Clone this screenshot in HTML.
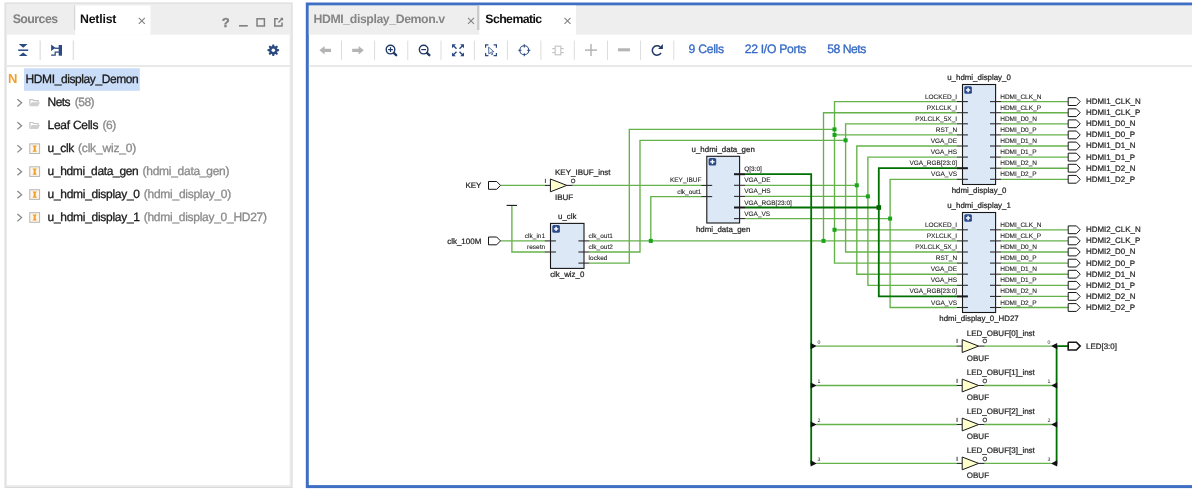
<!DOCTYPE html>
<html><head><meta charset="utf-8"><title>Schematic</title>
<style>
html,body{margin:0;padding:0;background:#fff;}
body{width:1192px;height:490px;overflow:hidden;font-family:'Liberation Sans', sans-serif;}
svg{display:block;position:absolute;left:0;top:0;font-family:'Liberation Sans', sans-serif;}
text{font-family:'Liberation Sans', sans-serif;text-rendering:geometricPrecision;}
.s text{stroke:#242424;stroke-width:0.22px;}
</style></head><body>
<svg width="1192" height="490" viewBox="0 0 1192 490">
<rect x="0.00" y="0.00" width="1192.00" height="490.00" fill="#ffffff" stroke="none" stroke-width="1.0"/>
<rect x="4.50" y="2.50" width="288.10" height="485.50" fill="#d9d9d9" stroke="none" stroke-width="1.0"/>
<rect x="5.50" y="3.50" width="286.10" height="483.50" fill="#ebebeb" stroke="none" stroke-width="1.0"/>
<rect x="7.00" y="4.00" width="282.60" height="481.00" fill="#ffffff" stroke="none" stroke-width="1.0"/>
<rect x="7.00" y="4.00" width="283.50" height="30.70" fill="#eeeeee" stroke="none" stroke-width="1.0"/>
<rect x="75.00" y="5.50" width="75.50" height="29.30" fill="#ffffff" stroke="none" stroke-width="1.0"/>
<line x1="74.70" y1="5.50" x2="74.70" y2="30.00" stroke="#d0d0d0" stroke-width="1"/>
<line x1="138.80" y1="17.80" x2="144.80" y2="23.80" stroke="#808080" stroke-width="1.1"/>
<line x1="138.80" y1="23.80" x2="144.80" y2="17.80" stroke="#808080" stroke-width="1.1"/>
<rect x="239.00" y="25.00" width="8.80" height="1.60" fill="#808080" stroke="none" stroke-width="1.0"/>
<rect x="257.00" y="18.80" width="7.40" height="7.20" fill="none" stroke="#808080" stroke-width="1.5"/>
<path d="M278.2 18.8 H274.8 V26 H282 V22.6" fill="none" stroke="#808080" stroke-width="1.5"/>
<path d="M278.4 22.4 L282.5 18.3 M280.6 18.4 H282.4 V20.2" fill="none" stroke="#808080" stroke-width="1.4"/>
<rect x="7.00" y="65.20" width="283.50" height="1.60" fill="#e4e4e4" stroke="none" stroke-width="1.0"/>
<path d="M18.8 43.9 H27.6 L23.2 47.8 Z M18.8 56.0 H27.6 L23.2 52.6 Z" fill="#2b4a82"/>
<rect x="18.20" y="49.45" width="10.00" height="1.50" fill="#2b4a82" stroke="none" stroke-width="1.0"/>
<line x1="40.20" y1="40.40" x2="40.20" y2="60.00" stroke="#e2e2e2" stroke-width="1.4"/>
<path d="M51.1 44.4 L55.4 47.8 L55.4 48.0 L51.1 51.0 Z" fill="#2b4a82"/>
<rect x="54.80" y="47.60" width="4.20" height="1.30" fill="#2b4a82" stroke="none" stroke-width="1.0"/>
<rect x="58.70" y="45.00" width="3.30" height="10.70" fill="#2b4a82" stroke="none" stroke-width="1.0"/>
<path d="M51.1 55.2 H55.2 V52.2 H58.9" fill="none" stroke="#2b4a82" stroke-width="1.2"/>
<line x1="73.40" y1="40.40" x2="73.40" y2="60.00" stroke="#e2e2e2" stroke-width="1.4"/>
<g transform="translate(273.3,50.2)">
<path d="M-1.45 -3.2 L-0.85 -5.8 H0.85 L1.45 -3.2 Z" fill="#2b4a82" transform="rotate(0)"/>
<path d="M-1.45 -3.2 L-0.85 -5.8 H0.85 L1.45 -3.2 Z" fill="#2b4a82" transform="rotate(45)"/>
<path d="M-1.45 -3.2 L-0.85 -5.8 H0.85 L1.45 -3.2 Z" fill="#2b4a82" transform="rotate(90)"/>
<path d="M-1.45 -3.2 L-0.85 -5.8 H0.85 L1.45 -3.2 Z" fill="#2b4a82" transform="rotate(135)"/>
<path d="M-1.45 -3.2 L-0.85 -5.8 H0.85 L1.45 -3.2 Z" fill="#2b4a82" transform="rotate(180)"/>
<path d="M-1.45 -3.2 L-0.85 -5.8 H0.85 L1.45 -3.2 Z" fill="#2b4a82" transform="rotate(225)"/>
<path d="M-1.45 -3.2 L-0.85 -5.8 H0.85 L1.45 -3.2 Z" fill="#2b4a82" transform="rotate(270)"/>
<path d="M-1.45 -3.2 L-0.85 -5.8 H0.85 L1.45 -3.2 Z" fill="#2b4a82" transform="rotate(315)"/>
<circle r="3.9" fill="#2b4a82"/><circle r="1.75" fill="#ffffff"/></g>
<rect x="24.00" y="68.30" width="115.80" height="22.50" fill="#c9dcf8" stroke="none" stroke-width="1.0"/>
<path d="M17.40 99.25 L21.60 102.85 L17.40 106.45" fill="none" stroke="#868686" stroke-width="1.25"/>
<path d="M29.90 105.55 V99.55 H32.90 L33.90 100.55 H38.10 V101.95" fill="none" stroke="#c4c4c4" stroke-width="1.2"/>
<path d="M29.70 106.15 L31.70 102.15 H39.90 L38.10 106.15 Z" fill="#cfcfcf"/>
<path d="M17.40 122.20 L21.60 125.80 L17.40 129.40" fill="none" stroke="#868686" stroke-width="1.25"/>
<path d="M29.90 128.50 V122.50 H32.90 L33.90 123.50 H38.10 V124.90" fill="none" stroke="#c4c4c4" stroke-width="1.2"/>
<path d="M29.70 129.10 L31.70 125.10 H39.90 L38.10 129.10 Z" fill="#cfcfcf"/>
<path d="M17.40 145.15 L21.60 148.75 L17.40 152.35" fill="none" stroke="#868686" stroke-width="1.25"/>
<rect x="29.80" y="143.85" width="9.80" height="9.60" fill="#fdf6ea" stroke="#b4b4b4" stroke-width="1"/>
<path d="M32.50 145.55 H36.90 L35.70 147.35 V149.95 L36.90 151.75 H32.50 L33.70 149.95 V147.35 Z" fill="#f0a030"/>
<path d="M17.40 168.10 L21.60 171.70 L17.40 175.30" fill="none" stroke="#868686" stroke-width="1.25"/>
<rect x="29.80" y="166.80" width="9.80" height="9.60" fill="#fdf6ea" stroke="#b4b4b4" stroke-width="1"/>
<path d="M32.50 168.50 H36.90 L35.70 170.30 V172.90 L36.90 174.70 H32.50 L33.70 172.90 V170.30 Z" fill="#f0a030"/>
<path d="M17.40 191.05 L21.60 194.65 L17.40 198.25" fill="none" stroke="#868686" stroke-width="1.25"/>
<rect x="29.80" y="189.75" width="9.80" height="9.60" fill="#fdf6ea" stroke="#b4b4b4" stroke-width="1"/>
<path d="M32.50 191.45 H36.90 L35.70 193.25 V195.85 L36.90 197.65 H32.50 L33.70 195.85 V193.25 Z" fill="#f0a030"/>
<path d="M17.40 214.00 L21.60 217.60 L17.40 221.20" fill="none" stroke="#868686" stroke-width="1.25"/>
<rect x="29.80" y="212.70" width="9.80" height="9.60" fill="#fdf6ea" stroke="#b4b4b4" stroke-width="1"/>
<path d="M32.50 214.40 H36.90 L35.70 216.20 V218.80 L36.90 220.60 H32.50 L33.70 218.80 V216.20 Z" fill="#f0a030"/>
<rect x="305.80" y="2.50" width="900.00" height="485.60" fill="#3f6fc3" stroke="none" stroke-width="1.0"/>
<rect x="308.80" y="5.60" width="900.00" height="479.50" fill="#ffffff" stroke="none" stroke-width="1.0"/>
<rect x="308.80" y="5.60" width="900.00" height="29.10" fill="#eeeeee" stroke="none" stroke-width="1.0"/>
<rect x="479.30" y="5.60" width="96.80" height="29.20" fill="#ffffff" stroke="none" stroke-width="1.0"/>
<rect x="477.10" y="5.60" width="2.20" height="24.40" fill="#c9c9c9" stroke="none" stroke-width="1.0"/>
<line x1="468.00" y1="17.80" x2="474.00" y2="23.80" stroke="#808080" stroke-width="1.1"/>
<line x1="468.00" y1="23.80" x2="474.00" y2="17.80" stroke="#808080" stroke-width="1.1"/>
<line x1="564.50" y1="17.80" x2="570.50" y2="23.80" stroke="#808080" stroke-width="1.1"/>
<line x1="564.50" y1="23.80" x2="570.50" y2="17.80" stroke="#808080" stroke-width="1.1"/>
<rect x="308.80" y="65.20" width="900.00" height="1.60" fill="#e4e4e4" stroke="none" stroke-width="1.0"/>
<line x1="341.50" y1="40.60" x2="341.50" y2="60.00" stroke="#dcdcdc" stroke-width="1"/>
<line x1="374.60" y1="40.60" x2="374.60" y2="60.00" stroke="#dcdcdc" stroke-width="1"/>
<line x1="407.75" y1="40.60" x2="407.75" y2="60.00" stroke="#dcdcdc" stroke-width="1"/>
<line x1="441.00" y1="40.60" x2="441.00" y2="60.00" stroke="#dcdcdc" stroke-width="1"/>
<line x1="474.40" y1="40.60" x2="474.40" y2="60.00" stroke="#dcdcdc" stroke-width="1"/>
<line x1="507.40" y1="40.60" x2="507.40" y2="60.00" stroke="#dcdcdc" stroke-width="1"/>
<line x1="540.90" y1="40.60" x2="540.90" y2="60.00" stroke="#dcdcdc" stroke-width="1"/>
<line x1="574.25" y1="40.60" x2="574.25" y2="60.00" stroke="#dcdcdc" stroke-width="1"/>
<line x1="607.50" y1="40.60" x2="607.50" y2="60.00" stroke="#dcdcdc" stroke-width="1"/>
<line x1="640.60" y1="40.60" x2="640.60" y2="60.00" stroke="#dcdcdc" stroke-width="1"/>
<line x1="673.75" y1="40.60" x2="673.75" y2="60.00" stroke="#dcdcdc" stroke-width="1"/>
<path d="M319.40 50.30 L324.60 46.10 V48.70 H331.00 V51.90 H324.60 V54.50 Z" fill="#b4b4b4"/>
<path d="M363.80 50.30 L358.60 46.10 V48.70 H352.20 V51.90 H358.60 V54.50 Z" fill="#b4b4b4"/>
<circle cx="390.50" cy="49.60" r="4.3" fill="none" stroke="#1f3864" stroke-width="1.4"/>
<path d="M394.00 53.10 L396.20 55.20" stroke="#1f3864" stroke-width="2.3" stroke-linecap="round"/>
<path d="M388.10 49.60 H392.90" stroke="#1f3864" stroke-width="1.2"/>
<path d="M390.50 47.20 V52.00" stroke="#1f3864" stroke-width="1.2"/>
<circle cx="423.65" cy="49.60" r="4.3" fill="none" stroke="#1f3864" stroke-width="1.4"/>
<path d="M427.15 53.10 L429.35 55.20" stroke="#1f3864" stroke-width="2.3" stroke-linecap="round"/>
<path d="M421.25 49.60 H426.05" stroke="#1f3864" stroke-width="1.2"/>
<path d="M452.00 44.30 L455.90 44.30 L452.00 48.20 Z" fill="#2b4a82"/>
<path d="M453.20 45.50 L456.50 48.80" stroke="#2b4a82" stroke-width="1.4"/>
<path d="M464.00 44.30 L460.10 44.30 L464.00 48.20 Z" fill="#2b4a82"/>
<path d="M462.80 45.50 L459.50 48.80" stroke="#2b4a82" stroke-width="1.4"/>
<path d="M452.00 56.30 L455.90 56.30 L452.00 52.40 Z" fill="#2b4a82"/>
<path d="M453.20 55.10 L456.50 51.80" stroke="#2b4a82" stroke-width="1.4"/>
<path d="M464.00 56.30 L460.10 56.30 L464.00 52.40 Z" fill="#2b4a82"/>
<path d="M462.80 55.10 L459.50 51.80" stroke="#2b4a82" stroke-width="1.4"/>
<path d="M488.40 44.90 H485.60 V47.70" fill="none" stroke="#2b4a82" stroke-width="1.2"/>
<path d="M493.60 44.90 H496.40 V47.70" fill="none" stroke="#2b4a82" stroke-width="1.2"/>
<path d="M488.40 55.70 H485.60 V52.90" fill="none" stroke="#2b4a82" stroke-width="1.2"/>
<path d="M493.60 55.70 H496.40 V52.90" fill="none" stroke="#2b4a82" stroke-width="1.2"/>
<path d="M488.60 47.10 L493.80 51.70 L491.60 51.90 L492.80 54.30 L491.60 54.70 L490.40 52.50 L488.80 53.90 Z" fill="#ffffff" stroke="#2b4a82" stroke-width="0.8"/>
<circle cx="524.3" cy="50.3" r="4.5" fill="none" stroke="#2b4a82" stroke-width="1.1"/>
<path d="M527.20 50.30 L530.30 50.30" stroke="#2b4a82" stroke-width="1.1"/>
<path d="M521.40 50.30 L518.30 50.30" stroke="#2b4a82" stroke-width="1.1"/>
<path d="M524.30 53.20 L524.30 56.30" stroke="#2b4a82" stroke-width="1.1"/>
<path d="M524.30 47.40 L524.30 44.30" stroke="#2b4a82" stroke-width="1.1"/>
<rect x="555.20" y="46.20" width="5.60" height="8.60" fill="none" stroke="#c6c6c6" stroke-width="1.2"/>
<line x1="552.20" y1="48.60" x2="555.20" y2="48.60" stroke="#c6c6c6" stroke-width="1.2"/>
<line x1="560.80" y1="48.60" x2="563.80" y2="48.60" stroke="#c6c6c6" stroke-width="1.2"/>
<line x1="552.20" y1="52.60" x2="555.20" y2="52.60" stroke="#c6c6c6" stroke-width="1.2"/>
<line x1="560.80" y1="52.60" x2="563.80" y2="52.60" stroke="#c6c6c6" stroke-width="1.2"/>
<line x1="585.00" y1="50.10" x2="597.00" y2="50.10" stroke="#b4b4b4" stroke-width="1.5"/>
<line x1="591.00" y1="44.10" x2="591.00" y2="56.10" stroke="#b4b4b4" stroke-width="1.5"/>
<rect x="618.00" y="48.30" width="12.00" height="3.00" fill="#b4b4b4" stroke="none" stroke-width="1.0"/>
<path d="M661.00 52.90 A4.7 4.7 0 1 1 660.20 47.00" fill="none" stroke="#1f3864" stroke-width="1.5"/>
<path d="M662.90 44.10 V49.10 H658.10 Z" fill="#1f3864"/>
<line x1="500.60" y1="185.40" x2="545.00" y2="185.40" stroke="#65b24a" stroke-width="1.35"/>
<line x1="572.50" y1="185.40" x2="701.20" y2="185.40" stroke="#65b24a" stroke-width="1.35"/>
<line x1="500.60" y1="240.90" x2="545.00" y2="240.90" stroke="#65b24a" stroke-width="1.35"/>
<polyline points="511.90,205.40 511.90,252.00 545.00,252.00" fill="none" stroke="#65b24a" stroke-width="1.35"/>
<line x1="506.60" y1="205.40" x2="517.00" y2="205.40" stroke="#161616" stroke-width="1.1"/>
<line x1="589.40" y1="240.90" x2="956.90" y2="240.90" stroke="#65b24a" stroke-width="1.35"/>
<polyline points="650.80,240.90 650.80,196.60 701.20,196.60" fill="none" stroke="#65b24a" stroke-width="1.35"/>
<polyline points="823.50,240.90 823.50,112.70 956.90,112.70" fill="none" stroke="#65b24a" stroke-width="1.35"/>
<polyline points="589.40,252.00 640.00,252.00 640.00,140.30 845.60,140.30" fill="none" stroke="#65b24a" stroke-width="1.35"/>
<polyline points="956.90,123.80 845.60,123.80 845.60,252.00 956.90,252.00" fill="none" stroke="#65b24a" stroke-width="1.35"/>
<polyline points="589.40,263.10 629.30,263.10 629.30,129.40 834.50,129.40" fill="none" stroke="#65b24a" stroke-width="1.35"/>
<polyline points="956.90,101.60 834.50,101.60 834.50,263.10 956.90,263.10" fill="none" stroke="#65b24a" stroke-width="1.35"/>
<line x1="834.50" y1="134.90" x2="956.90" y2="134.90" stroke="#65b24a" stroke-width="1.35"/>
<line x1="834.50" y1="229.80" x2="956.90" y2="229.80" stroke="#65b24a" stroke-width="1.35"/>
<line x1="745.00" y1="185.30" x2="856.80" y2="185.30" stroke="#65b24a" stroke-width="1.35"/>
<polyline points="956.90,146.00 856.80,146.00 856.80,274.20 956.90,274.20" fill="none" stroke="#65b24a" stroke-width="1.35"/>
<line x1="745.00" y1="196.40" x2="867.90" y2="196.40" stroke="#65b24a" stroke-width="1.35"/>
<polyline points="956.90,157.10 867.90,157.10 867.90,285.30 956.90,285.30" fill="none" stroke="#65b24a" stroke-width="1.35"/>
<line x1="745.00" y1="218.60" x2="890.10" y2="218.60" stroke="#65b24a" stroke-width="1.35"/>
<polyline points="956.90,179.30 890.10,179.30 890.10,307.50 956.90,307.50" fill="none" stroke="#65b24a" stroke-width="1.35"/>
<line x1="745.00" y1="207.50" x2="878.80" y2="207.50" stroke="#007000" stroke-width="1.8"/>
<polyline points="956.90,168.20 878.80,168.20 878.80,296.40 956.90,296.40" fill="none" stroke="#007000" stroke-width="1.8"/>
<polyline points="745.00,174.20 811.20,174.20 811.20,464.40" fill="none" stroke="#007000" stroke-width="1.8"/>
<line x1="816.40" y1="346.10" x2="957.00" y2="346.10" stroke="#65b24a" stroke-width="1.35"/>
<line x1="984.20" y1="346.10" x2="1051.60" y2="346.10" stroke="#65b24a" stroke-width="1.35"/>
<line x1="816.40" y1="385.50" x2="957.00" y2="385.50" stroke="#65b24a" stroke-width="1.35"/>
<line x1="984.20" y1="385.50" x2="1051.60" y2="385.50" stroke="#65b24a" stroke-width="1.35"/>
<line x1="816.40" y1="424.50" x2="957.00" y2="424.50" stroke="#65b24a" stroke-width="1.35"/>
<line x1="984.20" y1="424.50" x2="1051.60" y2="424.50" stroke="#65b24a" stroke-width="1.35"/>
<line x1="816.40" y1="463.40" x2="957.00" y2="463.40" stroke="#65b24a" stroke-width="1.35"/>
<line x1="984.20" y1="463.40" x2="1051.60" y2="463.40" stroke="#65b24a" stroke-width="1.35"/>
<polyline points="1056.60,464.40 1056.60,346.10 1068.30,346.10" fill="none" stroke="#007000" stroke-width="1.8"/>
<line x1="1001.00" y1="101.60" x2="1068.30" y2="101.60" stroke="#65b24a" stroke-width="1.35"/>
<line x1="1001.00" y1="112.70" x2="1068.30" y2="112.70" stroke="#65b24a" stroke-width="1.35"/>
<line x1="1001.00" y1="123.80" x2="1068.30" y2="123.80" stroke="#65b24a" stroke-width="1.35"/>
<line x1="1001.00" y1="134.90" x2="1068.30" y2="134.90" stroke="#65b24a" stroke-width="1.35"/>
<line x1="1001.00" y1="146.00" x2="1068.30" y2="146.00" stroke="#65b24a" stroke-width="1.35"/>
<line x1="1001.00" y1="157.10" x2="1068.30" y2="157.10" stroke="#65b24a" stroke-width="1.35"/>
<line x1="1001.00" y1="168.20" x2="1068.30" y2="168.20" stroke="#65b24a" stroke-width="1.35"/>
<line x1="1001.00" y1="179.30" x2="1068.30" y2="179.30" stroke="#65b24a" stroke-width="1.35"/>
<line x1="1001.00" y1="229.80" x2="1068.30" y2="229.80" stroke="#65b24a" stroke-width="1.35"/>
<line x1="1001.00" y1="240.90" x2="1068.30" y2="240.90" stroke="#65b24a" stroke-width="1.35"/>
<line x1="1001.00" y1="252.00" x2="1068.30" y2="252.00" stroke="#65b24a" stroke-width="1.35"/>
<line x1="1001.00" y1="263.10" x2="1068.30" y2="263.10" stroke="#65b24a" stroke-width="1.35"/>
<line x1="1001.00" y1="274.20" x2="1068.30" y2="274.20" stroke="#65b24a" stroke-width="1.35"/>
<line x1="1001.00" y1="285.30" x2="1068.30" y2="285.30" stroke="#65b24a" stroke-width="1.35"/>
<line x1="1001.00" y1="296.40" x2="1068.30" y2="296.40" stroke="#65b24a" stroke-width="1.35"/>
<line x1="1001.00" y1="307.50" x2="1068.30" y2="307.50" stroke="#65b24a" stroke-width="1.35"/>
<rect x="648.80" y="238.90" width="4.00" height="4.00" fill="#19a519" stroke="none" stroke-width="1.0"/>
<rect x="821.50" y="238.90" width="4.00" height="4.00" fill="#19a519" stroke="none" stroke-width="1.0"/>
<rect x="832.50" y="127.40" width="4.00" height="4.00" fill="#19a519" stroke="none" stroke-width="1.0"/>
<rect x="832.50" y="132.90" width="4.00" height="4.00" fill="#19a519" stroke="none" stroke-width="1.0"/>
<rect x="832.50" y="227.80" width="4.00" height="4.00" fill="#19a519" stroke="none" stroke-width="1.0"/>
<rect x="843.60" y="138.30" width="4.00" height="4.00" fill="#19a519" stroke="none" stroke-width="1.0"/>
<rect x="854.80" y="183.30" width="4.00" height="4.00" fill="#19a519" stroke="none" stroke-width="1.0"/>
<rect x="865.90" y="194.40" width="4.00" height="4.00" fill="#19a519" stroke="none" stroke-width="1.0"/>
<rect x="888.10" y="216.60" width="4.00" height="4.00" fill="#19a519" stroke="none" stroke-width="1.0"/>
<rect x="876.50" y="205.20" width="4.60" height="4.60" fill="#006400" stroke="none" stroke-width="1.0"/>
<path d="M810.60 343.00 L816.80 346.10 L810.60 349.20 Z" fill="#111"/>
<path d="M1057.20 343.00 L1051.00 346.10 L1057.20 349.20 Z" fill="#111"/>
<path d="M810.60 382.40 L816.80 385.50 L810.60 388.60 Z" fill="#111"/>
<path d="M1057.20 382.40 L1051.00 385.50 L1057.20 388.60 Z" fill="#111"/>
<path d="M810.60 421.40 L816.80 424.50 L810.60 427.60 Z" fill="#111"/>
<path d="M1057.20 421.40 L1051.00 424.50 L1057.20 427.60 Z" fill="#111"/>
<path d="M810.60 460.30 L816.80 463.40 L810.60 466.50 Z" fill="#111"/>
<path d="M1057.20 460.30 L1051.00 463.40 L1057.20 466.50 Z" fill="#111"/>
<polyline points="488.50,181.50 496.70,181.50 500.50,185.40 496.70,189.30 488.50,189.30 488.50,181.50" fill="#ffffff" stroke="#161616" stroke-width="1.0" stroke-linejoin="miter"/>
<polyline points="488.50,237.00 496.70,237.00 500.50,240.90 496.70,244.80 488.50,244.80 488.50,237.00" fill="#ffffff" stroke="#161616" stroke-width="1.0" stroke-linejoin="miter"/>
<polyline points="1068.20,97.70 1076.40,97.70 1080.20,101.60 1076.40,105.50 1068.20,105.50 1068.20,97.70" fill="#ffffff" stroke="#161616" stroke-width="1.0" stroke-linejoin="miter"/>
<polyline points="1068.20,108.80 1076.40,108.80 1080.20,112.70 1076.40,116.60 1068.20,116.60 1068.20,108.80" fill="#ffffff" stroke="#161616" stroke-width="1.0" stroke-linejoin="miter"/>
<polyline points="1068.20,119.90 1076.40,119.90 1080.20,123.80 1076.40,127.70 1068.20,127.70 1068.20,119.90" fill="#ffffff" stroke="#161616" stroke-width="1.0" stroke-linejoin="miter"/>
<polyline points="1068.20,131.00 1076.40,131.00 1080.20,134.90 1076.40,138.80 1068.20,138.80 1068.20,131.00" fill="#ffffff" stroke="#161616" stroke-width="1.0" stroke-linejoin="miter"/>
<polyline points="1068.20,142.10 1076.40,142.10 1080.20,146.00 1076.40,149.90 1068.20,149.90 1068.20,142.10" fill="#ffffff" stroke="#161616" stroke-width="1.0" stroke-linejoin="miter"/>
<polyline points="1068.20,153.20 1076.40,153.20 1080.20,157.10 1076.40,161.00 1068.20,161.00 1068.20,153.20" fill="#ffffff" stroke="#161616" stroke-width="1.0" stroke-linejoin="miter"/>
<polyline points="1068.20,164.30 1076.40,164.30 1080.20,168.20 1076.40,172.10 1068.20,172.10 1068.20,164.30" fill="#ffffff" stroke="#161616" stroke-width="1.0" stroke-linejoin="miter"/>
<polyline points="1068.20,175.40 1076.40,175.40 1080.20,179.30 1076.40,183.20 1068.20,183.20 1068.20,175.40" fill="#ffffff" stroke="#161616" stroke-width="1.0" stroke-linejoin="miter"/>
<polyline points="1068.20,225.90 1076.40,225.90 1080.20,229.80 1076.40,233.70 1068.20,233.70 1068.20,225.90" fill="#ffffff" stroke="#161616" stroke-width="1.0" stroke-linejoin="miter"/>
<polyline points="1068.20,237.00 1076.40,237.00 1080.20,240.90 1076.40,244.80 1068.20,244.80 1068.20,237.00" fill="#ffffff" stroke="#161616" stroke-width="1.0" stroke-linejoin="miter"/>
<polyline points="1068.20,248.10 1076.40,248.10 1080.20,252.00 1076.40,255.90 1068.20,255.90 1068.20,248.10" fill="#ffffff" stroke="#161616" stroke-width="1.0" stroke-linejoin="miter"/>
<polyline points="1068.20,259.20 1076.40,259.20 1080.20,263.10 1076.40,267.00 1068.20,267.00 1068.20,259.20" fill="#ffffff" stroke="#161616" stroke-width="1.0" stroke-linejoin="miter"/>
<polyline points="1068.20,270.30 1076.40,270.30 1080.20,274.20 1076.40,278.10 1068.20,278.10 1068.20,270.30" fill="#ffffff" stroke="#161616" stroke-width="1.0" stroke-linejoin="miter"/>
<polyline points="1068.20,281.40 1076.40,281.40 1080.20,285.30 1076.40,289.20 1068.20,289.20 1068.20,281.40" fill="#ffffff" stroke="#161616" stroke-width="1.0" stroke-linejoin="miter"/>
<polyline points="1068.20,292.50 1076.40,292.50 1080.20,296.40 1076.40,300.30 1068.20,300.30 1068.20,292.50" fill="#ffffff" stroke="#161616" stroke-width="1.0" stroke-linejoin="miter"/>
<polyline points="1068.20,303.60 1076.40,303.60 1080.20,307.50 1076.40,311.40 1068.20,311.40 1068.20,303.60" fill="#ffffff" stroke="#161616" stroke-width="1.0" stroke-linejoin="miter"/>
<polyline points="1068.20,342.20 1076.40,342.20 1080.20,346.10 1076.40,350.00 1068.20,350.00 1068.20,342.20" fill="#ffffff" stroke="#161616" stroke-width="1.6" stroke-linejoin="miter"/>
<rect x="962.50" y="84.50" width="33.10" height="100.00" fill="#dde8f7" stroke="#161616" stroke-width="1.1"/>
<rect x="964.30" y="86.20" width="7.60" height="7.60" fill="#2c4a8a" stroke="none" stroke-width="1.0" rx="1.5"/>
<line x1="965.90" y1="90.00" x2="970.30" y2="90.00" stroke="#ffffff" stroke-width="1.4"/>
<line x1="968.10" y1="87.80" x2="968.10" y2="92.20" stroke="#ffffff" stroke-width="1.4"/>
<line x1="956.90" y1="101.60" x2="967.90" y2="101.60" stroke="#2c2c2c" stroke-width="1.1"/>
<line x1="956.90" y1="112.70" x2="967.90" y2="112.70" stroke="#2c2c2c" stroke-width="1.1"/>
<line x1="956.90" y1="123.80" x2="967.90" y2="123.80" stroke="#2c2c2c" stroke-width="1.1"/>
<line x1="956.90" y1="134.90" x2="967.90" y2="134.90" stroke="#2c2c2c" stroke-width="1.1"/>
<line x1="956.90" y1="146.00" x2="967.90" y2="146.00" stroke="#2c2c2c" stroke-width="1.1"/>
<line x1="956.90" y1="157.10" x2="967.90" y2="157.10" stroke="#2c2c2c" stroke-width="1.1"/>
<line x1="956.90" y1="168.20" x2="967.90" y2="168.20" stroke="#1a1a1a" stroke-width="2.0"/>
<line x1="956.90" y1="179.30" x2="967.90" y2="179.30" stroke="#2c2c2c" stroke-width="1.1"/>
<line x1="990.00" y1="101.60" x2="1001.00" y2="101.60" stroke="#2c2c2c" stroke-width="1.1"/>
<line x1="990.00" y1="112.70" x2="1001.00" y2="112.70" stroke="#2c2c2c" stroke-width="1.1"/>
<line x1="990.00" y1="123.80" x2="1001.00" y2="123.80" stroke="#2c2c2c" stroke-width="1.1"/>
<line x1="990.00" y1="134.90" x2="1001.00" y2="134.90" stroke="#2c2c2c" stroke-width="1.1"/>
<line x1="990.00" y1="146.00" x2="1001.00" y2="146.00" stroke="#2c2c2c" stroke-width="1.1"/>
<line x1="990.00" y1="157.10" x2="1001.00" y2="157.10" stroke="#2c2c2c" stroke-width="1.1"/>
<line x1="990.00" y1="168.20" x2="1001.00" y2="168.20" stroke="#2c2c2c" stroke-width="1.1"/>
<line x1="990.00" y1="179.30" x2="1001.00" y2="179.30" stroke="#2c2c2c" stroke-width="1.1"/>
<rect x="962.50" y="212.50" width="33.10" height="100.00" fill="#dde8f7" stroke="#161616" stroke-width="1.1"/>
<rect x="964.30" y="214.20" width="7.60" height="7.60" fill="#2c4a8a" stroke="none" stroke-width="1.0" rx="1.5"/>
<line x1="965.90" y1="218.00" x2="970.30" y2="218.00" stroke="#ffffff" stroke-width="1.4"/>
<line x1="968.10" y1="215.80" x2="968.10" y2="220.20" stroke="#ffffff" stroke-width="1.4"/>
<line x1="956.90" y1="229.80" x2="967.90" y2="229.80" stroke="#2c2c2c" stroke-width="1.1"/>
<line x1="956.90" y1="240.90" x2="967.90" y2="240.90" stroke="#2c2c2c" stroke-width="1.1"/>
<line x1="956.90" y1="252.00" x2="967.90" y2="252.00" stroke="#2c2c2c" stroke-width="1.1"/>
<line x1="956.90" y1="263.10" x2="967.90" y2="263.10" stroke="#2c2c2c" stroke-width="1.1"/>
<line x1="956.90" y1="274.20" x2="967.90" y2="274.20" stroke="#2c2c2c" stroke-width="1.1"/>
<line x1="956.90" y1="285.30" x2="967.90" y2="285.30" stroke="#2c2c2c" stroke-width="1.1"/>
<line x1="956.90" y1="296.40" x2="967.90" y2="296.40" stroke="#1a1a1a" stroke-width="2.0"/>
<line x1="956.90" y1="307.50" x2="967.90" y2="307.50" stroke="#2c2c2c" stroke-width="1.1"/>
<line x1="990.00" y1="229.80" x2="1001.00" y2="229.80" stroke="#2c2c2c" stroke-width="1.1"/>
<line x1="990.00" y1="240.90" x2="1001.00" y2="240.90" stroke="#2c2c2c" stroke-width="1.1"/>
<line x1="990.00" y1="252.00" x2="1001.00" y2="252.00" stroke="#2c2c2c" stroke-width="1.1"/>
<line x1="990.00" y1="263.10" x2="1001.00" y2="263.10" stroke="#2c2c2c" stroke-width="1.1"/>
<line x1="990.00" y1="274.20" x2="1001.00" y2="274.20" stroke="#2c2c2c" stroke-width="1.1"/>
<line x1="990.00" y1="285.30" x2="1001.00" y2="285.30" stroke="#2c2c2c" stroke-width="1.1"/>
<line x1="990.00" y1="296.40" x2="1001.00" y2="296.40" stroke="#2c2c2c" stroke-width="1.1"/>
<line x1="990.00" y1="307.50" x2="1001.00" y2="307.50" stroke="#2c2c2c" stroke-width="1.1"/>
<rect x="706.80" y="156.30" width="32.80" height="66.70" fill="#dde8f7" stroke="#161616" stroke-width="1.1"/>
<rect x="708.60" y="158.00" width="7.60" height="7.60" fill="#2c4a8a" stroke="none" stroke-width="1.0" rx="1.5"/>
<line x1="710.20" y1="161.80" x2="714.60" y2="161.80" stroke="#ffffff" stroke-width="1.4"/>
<line x1="712.40" y1="159.60" x2="712.40" y2="164.00" stroke="#ffffff" stroke-width="1.4"/>
<line x1="701.20" y1="185.40" x2="712.20" y2="185.40" stroke="#2c2c2c" stroke-width="1.1"/>
<line x1="701.20" y1="196.60" x2="712.20" y2="196.60" stroke="#2c2c2c" stroke-width="1.1"/>
<line x1="734.00" y1="174.20" x2="745.00" y2="174.20" stroke="#1a1a1a" stroke-width="2.0"/>
<line x1="734.00" y1="185.30" x2="745.00" y2="185.30" stroke="#2c2c2c" stroke-width="1.1"/>
<line x1="734.00" y1="196.40" x2="745.00" y2="196.40" stroke="#2c2c2c" stroke-width="1.1"/>
<line x1="734.00" y1="207.50" x2="745.00" y2="207.50" stroke="#1a1a1a" stroke-width="2.0"/>
<line x1="734.00" y1="218.60" x2="745.00" y2="218.60" stroke="#2c2c2c" stroke-width="1.1"/>
<rect x="550.50" y="223.40" width="33.50" height="45.00" fill="#dde8f7" stroke="#161616" stroke-width="1.1"/>
<rect x="552.30" y="225.10" width="7.60" height="7.60" fill="#2c4a8a" stroke="none" stroke-width="1.0" rx="1.5"/>
<line x1="553.90" y1="228.90" x2="558.30" y2="228.90" stroke="#ffffff" stroke-width="1.4"/>
<line x1="556.10" y1="226.70" x2="556.10" y2="231.10" stroke="#ffffff" stroke-width="1.4"/>
<line x1="544.90" y1="240.90" x2="555.90" y2="240.90" stroke="#2c2c2c" stroke-width="1.1"/>
<line x1="544.90" y1="252.00" x2="555.90" y2="252.00" stroke="#2c2c2c" stroke-width="1.1"/>
<line x1="578.40" y1="240.90" x2="589.40" y2="240.90" stroke="#2c2c2c" stroke-width="1.1"/>
<line x1="578.40" y1="252.00" x2="589.40" y2="252.00" stroke="#2c2c2c" stroke-width="1.1"/>
<line x1="578.40" y1="263.10" x2="589.40" y2="263.10" stroke="#2c2c2c" stroke-width="1.1"/>
<line x1="545.00" y1="185.40" x2="550.40" y2="185.40" stroke="#2c2c2c" stroke-width="1.1"/>
<line x1="566.60" y1="185.40" x2="572.60" y2="185.40" stroke="#2c2c2c" stroke-width="1.1"/>
<polyline points="550.40,179.00 566.80,185.40 550.40,191.80 550.40,179.00" fill="#ffffcc" stroke="#161616" stroke-width="1.0" stroke-linejoin="miter"/>
<line x1="956.80" y1="346.10" x2="962.20" y2="346.10" stroke="#2c2c2c" stroke-width="1.1"/>
<line x1="978.40" y1="346.10" x2="984.40" y2="346.10" stroke="#2c2c2c" stroke-width="1.1"/>
<polyline points="962.20,339.70 978.60,346.10 962.20,352.50 962.20,339.70" fill="#ffffcc" stroke="#161616" stroke-width="1.0" stroke-linejoin="miter"/>
<line x1="956.80" y1="385.50" x2="962.20" y2="385.50" stroke="#2c2c2c" stroke-width="1.1"/>
<line x1="978.40" y1="385.50" x2="984.40" y2="385.50" stroke="#2c2c2c" stroke-width="1.1"/>
<polyline points="962.20,379.10 978.60,385.50 962.20,391.90 962.20,379.10" fill="#ffffcc" stroke="#161616" stroke-width="1.0" stroke-linejoin="miter"/>
<line x1="956.80" y1="424.50" x2="962.20" y2="424.50" stroke="#2c2c2c" stroke-width="1.1"/>
<line x1="978.40" y1="424.50" x2="984.40" y2="424.50" stroke="#2c2c2c" stroke-width="1.1"/>
<polyline points="962.20,418.10 978.60,424.50 962.20,430.90 962.20,418.10" fill="#ffffcc" stroke="#161616" stroke-width="1.0" stroke-linejoin="miter"/>
<line x1="956.80" y1="463.40" x2="962.20" y2="463.40" stroke="#2c2c2c" stroke-width="1.1"/>
<line x1="978.40" y1="463.40" x2="984.40" y2="463.40" stroke="#2c2c2c" stroke-width="1.1"/>
<polyline points="962.20,457.00 978.60,463.40 962.20,469.80 962.20,457.00" fill="#ffffcc" stroke="#161616" stroke-width="1.0" stroke-linejoin="miter"/>
</svg>
<svg width="1192" height="490" viewBox="0 0 1192 490" style="will-change:transform">
<g class="u"><text x="12.70" y="22.80" font-size="12.4" fill="#7f7f7f" font-weight="bold" textLength="45.40" lengthAdjust="spacing">Sources</text>
<text x="80.00" y="22.80" font-size="12.3" fill="#111" font-weight="bold" textLength="36.40" lengthAdjust="spacing">Netlist</text>
<text x="221.70" y="27.00" font-size="13" fill="#808080" font-weight="bold" stroke="#808080" stroke-width="0.35">?</text>
<text x="7.90" y="83.42" font-size="13" fill="#f0a030" font-weight="bold">N</text>
<text x="25.60" y="83.22" font-size="12" fill="#1a1a1a" textLength="113.20" lengthAdjust="spacing" stroke="#1a1a1a" stroke-width="0.3">HDMI_display_Demon</text>
<text x="47.60" y="106.17" font-size="12" fill="#1a1a1a" textLength="23.00" lengthAdjust="spacing" stroke="#1a1a1a" stroke-width="0.3">Nets</text>
<text x="74.75" y="106.17" font-size="12" fill="#8a8a8a" textLength="19.85" lengthAdjust="spacing" stroke="#8a8a8a" stroke-width="0.3">(58)</text>
<text x="47.50" y="129.12" font-size="12" fill="#1a1a1a" textLength="51.00" lengthAdjust="spacing" stroke="#1a1a1a" stroke-width="0.3">Leaf Cells</text>
<text x="102.50" y="129.12" font-size="12" fill="#8a8a8a" textLength="13.75" lengthAdjust="spacing" stroke="#8a8a8a" stroke-width="0.3">(6)</text>
<text x="47.50" y="152.07" font-size="12" fill="#1a1a1a" textLength="26.75" lengthAdjust="spacing" stroke="#1a1a1a" stroke-width="0.3">u_clk</text>
<text x="78.00" y="152.07" font-size="12" fill="#8a8a8a" textLength="58.25" lengthAdjust="spacing" stroke="#8a8a8a" stroke-width="0.3">(clk_wiz_0)</text>
<text x="47.50" y="175.02" font-size="12" fill="#1a1a1a" textLength="91.25" lengthAdjust="spacing" stroke="#1a1a1a" stroke-width="0.3">u_hdmi_data_gen</text>
<text x="142.50" y="175.02" font-size="12" fill="#8a8a8a" textLength="87.00" lengthAdjust="spacing" stroke="#8a8a8a" stroke-width="0.3">(hdmi_data_gen)</text>
<text x="47.50" y="197.97" font-size="12" fill="#1a1a1a" textLength="92.50" lengthAdjust="spacing" stroke="#1a1a1a" stroke-width="0.3">u_hdmi_display_0</text>
<text x="143.75" y="197.97" font-size="12" fill="#8a8a8a" textLength="87.50" lengthAdjust="spacing" stroke="#8a8a8a" stroke-width="0.3">(hdmi_display_0)</text>
<text x="47.50" y="220.92" font-size="12" fill="#1a1a1a" textLength="92.50" lengthAdjust="spacing" stroke="#1a1a1a" stroke-width="0.3">u_hdmi_display_1</text>
<text x="143.75" y="220.92" font-size="12" fill="#8a8a8a" textLength="123.25" lengthAdjust="spacing" stroke="#8a8a8a" stroke-width="0.3">(hdmi_display_0_HD27)</text>
<text x="313.60" y="22.80" font-size="12.3" fill="#858585" font-weight="bold" textLength="131.50" lengthAdjust="spacing">HDMI_display_Demon.v</text>
<text x="485.30" y="22.80" font-size="12.3" fill="#111" font-weight="bold" textLength="56.90" lengthAdjust="spacing">Schematic</text>
<text x="688.60" y="53.40" font-size="12.2" fill="#3569c4" textLength="35.50" lengthAdjust="spacing" stroke="#3569c4" stroke-width="0.3">9 Cells</text>
<text x="744.70" y="53.40" font-size="12.2" fill="#3569c4" textLength="61.70" lengthAdjust="spacing" stroke="#3569c4" stroke-width="0.3">22 I/O Ports</text>
<text x="827.30" y="53.40" font-size="12.2" fill="#3569c4" textLength="39.00" lengthAdjust="spacing" stroke="#3569c4" stroke-width="0.3">58 Nets</text></g>
<g class="s"><text x="817.60" y="343.70" font-size="5.2" fill="#242424" style="stroke:none">0</text>
<text x="1047.60" y="343.70" font-size="5.2" fill="#242424" style="stroke:none">0</text>
<text x="817.60" y="383.10" font-size="5.2" fill="#242424" style="stroke:none">1</text>
<text x="1047.60" y="383.10" font-size="5.2" fill="#242424" style="stroke:none">1</text>
<text x="817.60" y="422.10" font-size="5.2" fill="#242424" style="stroke:none">2</text>
<text x="1047.60" y="422.10" font-size="5.2" fill="#242424" style="stroke:none">2</text>
<text x="817.60" y="461.00" font-size="5.2" fill="#242424" style="stroke:none">3</text>
<text x="1047.60" y="461.00" font-size="5.2" fill="#242424" style="stroke:none">3</text>
<text x="481.40" y="188.20" font-size="8" fill="#242424" text-anchor="end">KEY</text>
<text x="481.40" y="243.70" font-size="8" fill="#242424" text-anchor="end">clk_100M</text>
<text x="1086.00" y="104.05" font-size="7.95" fill="#242424">HDMI1_CLK_N</text>
<text x="1086.00" y="115.15" font-size="7.95" fill="#242424">HDMI1_CLK_P</text>
<text x="1086.00" y="126.25" font-size="7.95" fill="#242424">HDMI1_D0_N</text>
<text x="1086.00" y="137.35" font-size="7.95" fill="#242424">HDMI1_D0_P</text>
<text x="1086.00" y="148.45" font-size="7.95" fill="#242424">HDMI1_D1_N</text>
<text x="1086.00" y="159.55" font-size="7.95" fill="#242424">HDMI1_D1_P</text>
<text x="1086.00" y="170.65" font-size="7.95" fill="#242424">HDMI1_D2_N</text>
<text x="1086.00" y="181.75" font-size="7.95" fill="#242424">HDMI1_D2_P</text>
<text x="1086.00" y="232.25" font-size="7.95" fill="#242424">HDMI2_CLK_N</text>
<text x="1086.00" y="243.35" font-size="7.95" fill="#242424">HDMI2_CLK_P</text>
<text x="1086.00" y="254.45" font-size="7.95" fill="#242424">HDMI2_D0_N</text>
<text x="1086.00" y="265.55" font-size="7.95" fill="#242424">HDMI2_D0_P</text>
<text x="1086.00" y="276.65" font-size="7.95" fill="#242424">HDMI2_D1_N</text>
<text x="1086.00" y="287.75" font-size="7.95" fill="#242424">HDMI2_D1_P</text>
<text x="1086.00" y="298.85" font-size="7.95" fill="#242424">HDMI2_D2_N</text>
<text x="1086.00" y="309.95" font-size="7.95" fill="#242424">HDMI2_D2_P</text>
<text x="1086.00" y="348.60" font-size="7.95" fill="#242424">LED[3:0]</text>
<text x="979.05" y="79.70" font-size="7.9" fill="#242424" text-anchor="middle">u_hdmi_display_0</text>
<text x="979.05" y="193.30" font-size="7.9" fill="#242424" text-anchor="middle">hdmi_display_0</text>
<text x="957.10" y="98.60" font-size="6.5" fill="#242424" text-anchor="end" style="stroke-width:0.1px">LOCKED_I</text>
<text x="957.10" y="109.70" font-size="6.5" fill="#242424" text-anchor="end" style="stroke-width:0.1px">PXLCLK_I</text>
<text x="957.10" y="120.80" font-size="6.5" fill="#242424" text-anchor="end" style="stroke-width:0.1px">PXLCLK_5X_I</text>
<text x="957.10" y="131.90" font-size="6.5" fill="#242424" text-anchor="end" style="stroke-width:0.1px">RST_N</text>
<text x="957.10" y="143.00" font-size="6.5" fill="#242424" text-anchor="end" style="stroke-width:0.1px">VGA_DE</text>
<text x="957.10" y="154.10" font-size="6.5" fill="#242424" text-anchor="end" style="stroke-width:0.1px">VGA_HS</text>
<text x="957.10" y="165.20" font-size="6.5" fill="#242424" text-anchor="end" style="stroke-width:0.1px">VGA_RGB[23:0]</text>
<text x="957.10" y="176.30" font-size="6.5" fill="#242424" text-anchor="end" style="stroke-width:0.1px">VGA_VS</text>
<text x="1000.20" y="98.60" font-size="6.5" fill="#242424" style="stroke-width:0.1px">HDMI_CLK_N</text>
<text x="1000.20" y="109.70" font-size="6.5" fill="#242424" style="stroke-width:0.1px">HDMI_CLK_P</text>
<text x="1000.20" y="120.80" font-size="6.5" fill="#242424" style="stroke-width:0.1px">HDMI_D0_N</text>
<text x="1000.20" y="131.90" font-size="6.5" fill="#242424" style="stroke-width:0.1px">HDMI_D0_P</text>
<text x="1000.20" y="143.00" font-size="6.5" fill="#242424" style="stroke-width:0.1px">HDMI_D1_N</text>
<text x="1000.20" y="154.10" font-size="6.5" fill="#242424" style="stroke-width:0.1px">HDMI_D1_P</text>
<text x="1000.20" y="165.20" font-size="6.5" fill="#242424" style="stroke-width:0.1px">HDMI_D2_N</text>
<text x="1000.20" y="176.30" font-size="6.5" fill="#242424" style="stroke-width:0.1px">HDMI_D2_P</text>
<text x="979.05" y="207.70" font-size="7.9" fill="#242424" text-anchor="middle">u_hdmi_display_1</text>
<text x="979.05" y="321.30" font-size="7.9" fill="#242424" text-anchor="middle">hdmi_display_0_HD27</text>
<text x="957.10" y="226.80" font-size="6.5" fill="#242424" text-anchor="end" style="stroke-width:0.1px">LOCKED_I</text>
<text x="957.10" y="237.90" font-size="6.5" fill="#242424" text-anchor="end" style="stroke-width:0.1px">PXLCLK_I</text>
<text x="957.10" y="249.00" font-size="6.5" fill="#242424" text-anchor="end" style="stroke-width:0.1px">PXLCLK_5X_I</text>
<text x="957.10" y="260.10" font-size="6.5" fill="#242424" text-anchor="end" style="stroke-width:0.1px">RST_N</text>
<text x="957.10" y="271.20" font-size="6.5" fill="#242424" text-anchor="end" style="stroke-width:0.1px">VGA_DE</text>
<text x="957.10" y="282.30" font-size="6.5" fill="#242424" text-anchor="end" style="stroke-width:0.1px">VGA_HS</text>
<text x="957.10" y="293.40" font-size="6.5" fill="#242424" text-anchor="end" style="stroke-width:0.1px">VGA_RGB[23:0]</text>
<text x="957.10" y="304.50" font-size="6.5" fill="#242424" text-anchor="end" style="stroke-width:0.1px">VGA_VS</text>
<text x="1000.20" y="226.80" font-size="6.5" fill="#242424" style="stroke-width:0.1px">HDMI_CLK_N</text>
<text x="1000.20" y="237.90" font-size="6.5" fill="#242424" style="stroke-width:0.1px">HDMI_CLK_P</text>
<text x="1000.20" y="249.00" font-size="6.5" fill="#242424" style="stroke-width:0.1px">HDMI_D0_N</text>
<text x="1000.20" y="260.10" font-size="6.5" fill="#242424" style="stroke-width:0.1px">HDMI_D0_P</text>
<text x="1000.20" y="271.20" font-size="6.5" fill="#242424" style="stroke-width:0.1px">HDMI_D1_N</text>
<text x="1000.20" y="282.30" font-size="6.5" fill="#242424" style="stroke-width:0.1px">HDMI_D1_P</text>
<text x="1000.20" y="293.40" font-size="6.5" fill="#242424" style="stroke-width:0.1px">HDMI_D2_N</text>
<text x="1000.20" y="304.50" font-size="6.5" fill="#242424" style="stroke-width:0.1px">HDMI_D2_P</text>
<text x="723.20" y="151.50" font-size="7.9" fill="#242424" text-anchor="middle">u_hdmi_data_gen</text>
<text x="723.20" y="231.80" font-size="7.9" fill="#242424" text-anchor="middle">hdmi_data_gen</text>
<text x="701.40" y="182.40" font-size="6.5" fill="#242424" text-anchor="end" style="stroke-width:0.1px">KEY_IBUF</text>
<text x="701.40" y="193.60" font-size="6.5" fill="#242424" text-anchor="end" style="stroke-width:0.1px">clk_out1</text>
<text x="744.20" y="171.20" font-size="6.5" fill="#242424" style="stroke-width:0.1px">Q[3:0]</text>
<text x="744.20" y="182.30" font-size="6.5" fill="#242424" style="stroke-width:0.1px">VGA_DE</text>
<text x="744.20" y="193.40" font-size="6.5" fill="#242424" style="stroke-width:0.1px">VGA_HS</text>
<text x="744.20" y="204.50" font-size="6.5" fill="#242424" style="stroke-width:0.1px">VGA_RGB[23:0]</text>
<text x="744.20" y="215.60" font-size="6.5" fill="#242424" style="stroke-width:0.1px">VGA_VS</text>
<text x="567.25" y="218.60" font-size="7.9" fill="#242424" text-anchor="middle">u_clk</text>
<text x="567.25" y="277.20" font-size="7.9" fill="#242424" text-anchor="middle">clk_wiz_0</text>
<text x="545.10" y="237.90" font-size="6.5" fill="#242424" text-anchor="end" style="stroke-width:0.1px">clk_in1</text>
<text x="545.10" y="249.00" font-size="6.5" fill="#242424" text-anchor="end" style="stroke-width:0.1px">resetn</text>
<text x="588.60" y="237.90" font-size="6.5" fill="#242424" style="stroke-width:0.1px">clk_out1</text>
<text x="588.60" y="249.00" font-size="6.5" fill="#242424" style="stroke-width:0.1px">clk_out2</text>
<text x="588.60" y="260.10" font-size="6.5" fill="#242424" style="stroke-width:0.1px">locked</text>
<text x="555.00" y="175.00" font-size="8" fill="#242424">KEY_IBUF_inst</text>
<text x="555.00" y="200.20" font-size="8" fill="#242424">IBUF</text>
<text x="544.40" y="182.50" font-size="6" fill="#242424">I</text>
<text x="570.80" y="182.50" font-size="6" fill="#242424">O</text>
<text x="966.80" y="335.70" font-size="8" fill="#242424">LED_OBUF[0]_inst</text>
<text x="966.80" y="360.90" font-size="8" fill="#242424">OBUF</text>
<text x="956.20" y="343.20" font-size="6" fill="#242424">I</text>
<text x="982.60" y="343.20" font-size="6" fill="#242424">O</text>
<text x="966.80" y="375.10" font-size="8" fill="#242424">LED_OBUF[1]_inst</text>
<text x="966.80" y="400.30" font-size="8" fill="#242424">OBUF</text>
<text x="956.20" y="382.60" font-size="6" fill="#242424">I</text>
<text x="982.60" y="382.60" font-size="6" fill="#242424">O</text>
<text x="966.80" y="414.10" font-size="8" fill="#242424">LED_OBUF[2]_inst</text>
<text x="966.80" y="439.30" font-size="8" fill="#242424">OBUF</text>
<text x="956.20" y="421.60" font-size="6" fill="#242424">I</text>
<text x="982.60" y="421.60" font-size="6" fill="#242424">O</text>
<text x="966.80" y="453.00" font-size="8" fill="#242424">LED_OBUF[3]_inst</text>
<text x="966.80" y="478.20" font-size="8" fill="#242424">OBUF</text>
<text x="956.20" y="460.50" font-size="6" fill="#242424">I</text>
<text x="982.60" y="460.50" font-size="6" fill="#242424">O</text></g>
</svg>
</body></html>
